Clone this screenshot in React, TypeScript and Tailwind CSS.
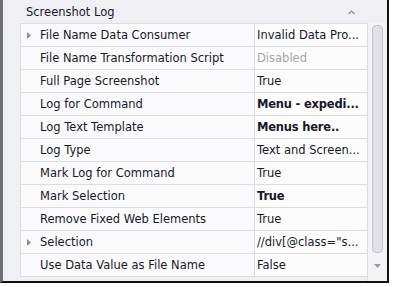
import React from "react";

type Row = { name: string; value: string; expand?: boolean; bold?: boolean; disabled?: boolean };

const rows: Row[] = [
  { name: "File Name Data Consumer", value: "Invalid Data Pro...", expand: true },
  { name: "File Name Transformation Script", value: "Disabled", disabled: true },
  { name: "Full Page Screenshot", value: "True" },
  { name: "Log for Command", value: "Menu - expedi...", bold: true },
  { name: "Log Text Template", value: "Menus here..", bold: true },
  { name: "Log Type", value: "Text and Screen..." },
  { name: "Mark Log for Command", value: "True" },
  { name: "Mark Selection", value: "True", bold: true },
  { name: "Remove Fixed Web Elements", value: "True" },
  { name: "Selection", value: '//div[@class="s...', expand: true },
  { name: "Use Data Value as File Name", value: "False" },
];

export default function App() {
  return (
    <div
      className="w-[394px] h-[287px] bg-white overflow-hidden"
      style={{ fontFamily: '"DejaVu Sans", Tahoma, sans-serif' }}
    >
      <div className="w-[389px] h-[283px] border-l-[3px] border-l-[#6e6e72] border-r-2 border-r-[#111] border-b-2 border-b-[#111] bg-[#f0f0f4] flex flex-col text-[11.5px] text-[#18182a]">
        {/* header */}
        <div className="h-[24px] shrink-0 flex items-center border-b border-[#dcdce2] ml-[17px] mr-[20px] pl-[6px] pt-[2px] relative">
          <span>Screenshot Log</span>
          <svg className="absolute right-[12px] top-[10px]" width="7" height="5" viewBox="0 0 7 5">
            <path d="M0.5 4 L3.5 1 L6.5 4" fill="none" stroke="#8a8a92" strokeWidth="1.2" />
          </svg>
        </div>
        <div className="flex flex-1 min-h-0 -mt-[1px]">
          <div className="w-[17px] shrink-0 bg-[#eef0f3]" />
          <div className="w-[347px] shrink-0 flex flex-col">
            <div className="border-t border-[#dcdce2]" />
            {rows.map((r) => (
              <div key={r.name} className="h-[23px] flex border-b border-[#dcdce2] bg-[#fafafc]">
                <div className="w-[234px] shrink-0 border-l border-[#dcdce2] flex items-center relative pl-[19px] pt-[1px] whitespace-nowrap overflow-hidden">
                  {r.expand && (
                    <svg className="absolute left-[6px] top-[8px]" width="4" height="7" viewBox="0 0 4 7">
                      <path d="M0 0 L4 3.5 L0 7 Z" fill="#8c8c94" />
                    </svg>
                  )}
                  <span>{r.name}</span>
                </div>
                <div
                  className={
                    "flex-1 border-l border-[#dcdce2] flex items-center pl-[2px] pt-[1px] whitespace-nowrap overflow-hidden bg-[#fcfcfd] " +
                    (r.bold ? "font-bold tracking-[-0.2px] " : "") +
                    (r.disabled ? "text-[#a4a4ac]" : "")
                  }
                >
                  {r.value}
                </div>
              </div>
            ))}
          </div>
          <div className="w-[20px] shrink-0 bg-[#f4f4f7] border-l border-[#dcdce2] flex flex-col items-center pt-[2px] relative">
            <div className="w-[11px] h-[228px] rounded-[4px] bg-[#e0e1e6] border border-[#c4c5cc]" />
            <svg className="absolute left-[6px] top-[241px]" width="7" height="4" viewBox="0 0 7 4">
              <path d="M0 0 L7 0 L3.5 4 Z" fill="#9a9aa2" />
            </svg>
          </div>
        </div>
      </div>
    </div>
  );
}
